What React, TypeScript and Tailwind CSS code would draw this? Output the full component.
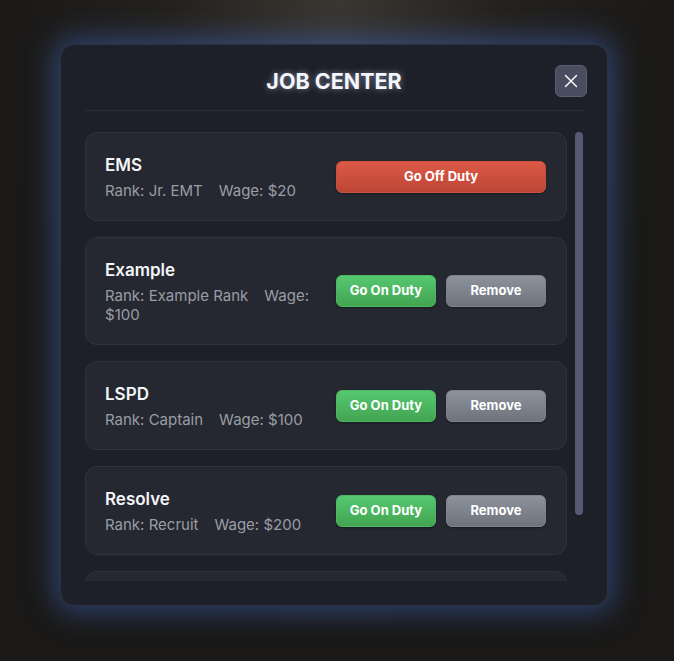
import React from 'react';
import { X } from 'lucide-react';

interface Job {
  name: string;
  rank: string;
  wage: number;
  onDuty: boolean;
  removable: boolean;
}

const jobs: Job[] = [
  { name: 'EMS', rank: 'Jr. EMT', wage: 20, onDuty: true, removable: false },
  { name: 'Example', rank: 'Example Rank', wage: 100, onDuty: false, removable: true },
  { name: 'LSPD', rank: 'Captain', wage: 100, onDuty: false, removable: true },
  { name: 'Resolve', rank: 'Recruit', wage: 200, onDuty: false, removable: true },
  { name: 'Unemployed', rank: 'Civilian', wage: 10, onDuty: false, removable: true },
];

const btnBase =
  'h-8 rounded-md text-[13px] font-bold text-white border shadow-[0_1px_2px_rgba(0,0,0,0.35)]';

const JobCard: React.FC<{ job: Job }> = ({ job }) => (
  <div className="flex items-center gap-5 rounded-xl border border-[#30333d] bg-[#252831] py-5 pl-[19px] pr-5">
    <div className="flex-1 min-w-0">
      <div className="text-[17px] leading-6 font-semibold text-[#f4f5f7]">{job.name}</div>
      <div className="mt-1 text-[15px] leading-[19px] text-[#9a9da5]">
        <span className="mr-4">Rank: {job.rank}</span>
        <span>Wage: ${job.wage}</span>
      </div>
    </div>
    <div className="flex gap-[10px] shrink-0">
      {job.onDuty ? (
        <button
          className={`${btnBase} w-[210px] border-[#c9503f] bg-gradient-to-b from-[#dc5a47] to-[#bd4536]`}
        >
          Go Off Duty
        </button>
      ) : (
        <>
          <button
            className={`${btnBase} w-[100px] border-[#4db862] bg-gradient-to-b from-[#56c871] to-[#43a451]`}
          >
            Go On Duty
          </button>
          {job.removable && (
            <button
              className={`${btnBase} w-[100px] border-[#7d828b] bg-gradient-to-b from-[#8d929b] to-[#6e737c]`}
            >
              Remove
            </button>
          )}
        </>
      )}
    </div>
  </div>
);

export default function App() {
  return (
    <div
      className="min-h-[661px] w-full overflow-hidden bg-[#1b1a19] bg-[radial-gradient(ellipse_at_50%_0%,#3a3732_0%,#24221f_35%,#1a1918_70%)] pt-[44px] pl-[60px]"
      style={{ fontFamily: 'Inter, "Noto Sans", sans-serif' }}
    >
      <div className="w-[548px] rounded-[14px] border border-[#2f323c] bg-[#1e2029] px-6 pt-[20px] pb-6 shadow-[0_0_28px_6px_rgba(58,98,180,0.55)]">
        {/* header */}
        <div className="relative flex h-8 items-center justify-center">
          <h1 className="text-[21.5px] font-bold text-[#f5f6fa] [text-shadow:0_0_6px_rgba(200,215,255,0.55)]">
            JOB CENTER
          </h1>
          <button className="absolute right-[-4px] top-0 flex h-8 w-8 items-center justify-center rounded-md border border-[#5b5f72] bg-[#4a4d60] text-white">
            <X size={22} strokeWidth={1.5} />
          </button>
        </div>
        <div className="mt-[13px] mb-[21px] h-px bg-[#2c2f38]" />

        {/* job list with its scroll track */}
        <div className="flex h-[449px] gap-2">
          <div className="flex-1 overflow-hidden">
            <div className="flex flex-col gap-4">
              {jobs.map((job) => (
                <JobCard key={job.name} job={job} />
              ))}
            </div>
          </div>
          <div className="w-2 shrink-0">
            <div className="h-[383px] rounded-full bg-[#555a70]" />
          </div>
        </div>
      </div>
    </div>
  );
}
